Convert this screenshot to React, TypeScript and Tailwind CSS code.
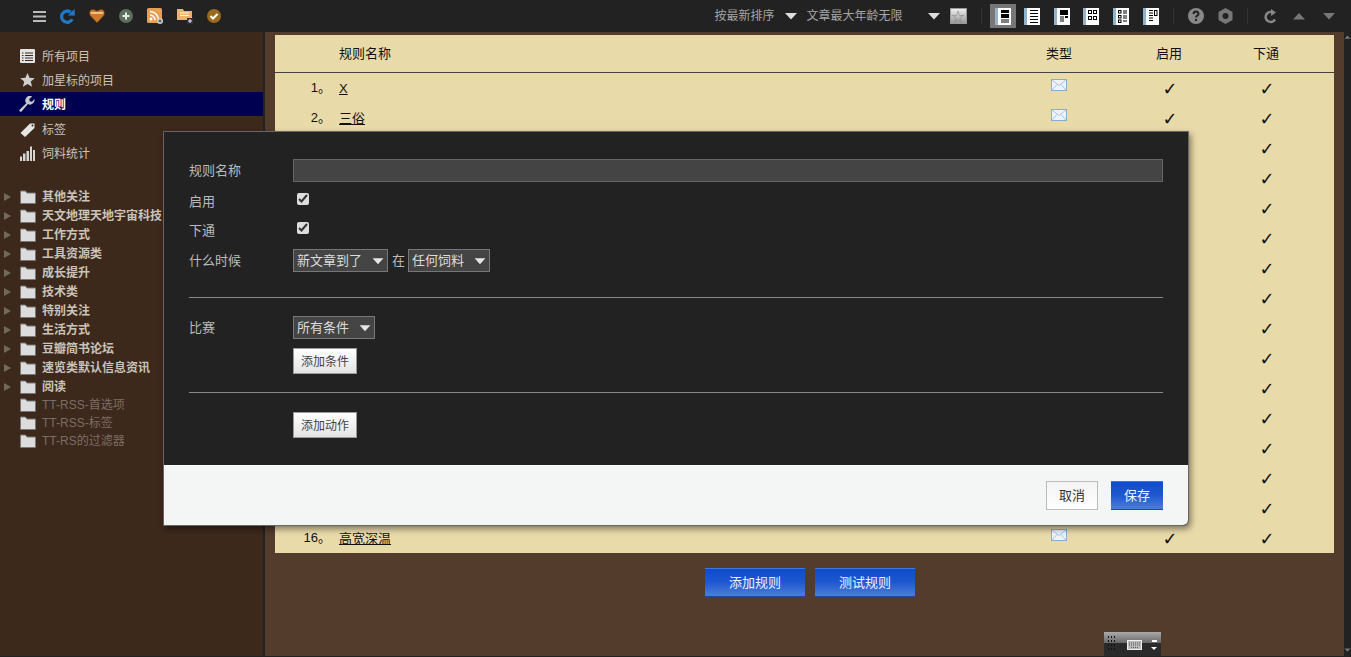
const CJK = `font-["Liberation_Sans","Noto_Sans_CJK_SC",sans-serif]`;

const Tri = ({ down = true, className = "" }: { down?: boolean; className?: string }) => (
  <svg width="14" height="8" viewBox="0 0 14 8" className={className}>
    <path d={down ? "M1 1h12L7 7.5z" : "M1 7.5h12L7 1z"} fill="currentColor" />
  </svg>
);

const LayoutIcon = ({ variant, active }: { variant: number; active?: boolean }) => {
  const bodies: Record<number, React.ReactNode> = {
    0: (
      <>
        <rect x="6" y="2" width="8" height="3" fill="#000" />
        <rect x="6" y="6" width="8" height="4" fill="#000" />
        <path d="M6 12h8M6 14h8" stroke="#000" />
      </>
    ),
    1: <path d="M6 2.5h8M6 5.5h8M6 8.5h8M6 11.5h8M6 14.5h8" stroke="#000" />,
    2: (
      <>
        <rect x="6" y="2" width="8" height="5" fill="#000" />
        <path d="M6 9h4M6 11h4M6 13h4" stroke="#000" />
        <rect x="11" y="8" width="3" height="2" fill="#000" />
      </>
    ),
    3: (
      <g fill="none" stroke="#000">
        <rect x="5.5" y="2.5" width="3" height="3" />
        <rect x="10.5" y="2.5" width="3" height="3" />
        <rect x="5.5" y="8.5" width="3" height="3" />
        <rect x="10.5" y="8.5" width="3" height="3" />
      </g>
    ),
    4: (
      <>
        <g fill="none" stroke="#000">
          <rect x="5.5" y="2.5" width="2.5" height="2.5" />
          <rect x="5.5" y="7.5" width="2.5" height="2.5" />
          <rect x="5.5" y="12" width="2.5" height="2.5" />
        </g>
        <path d="M10 3h4M10 5h4M10 8h4M10 10h4M10 13h4" stroke="#000" />
      </>
    ),
    5: (
      <>
        <path d="M6 2.5h4M6 5h4M6 7.5h4M6 10h4M6 12.5h4" stroke="#000" />
        <rect x="11.5" y="2.5" width="2.5" height="5" fill="none" stroke="#000" />
      </>
    ),
  };
  return (
    <span className={`flex w-[26px] h-6 items-center justify-center ${active ? "bg-[#777]" : ""}`}>
      <svg width="16" height="17" viewBox="0 0 16 17">
        <rect width="16" height="17" fill="#fff" />
        <rect width="3" height="17" fill="#8fb4cc" />
        {bodies[variant]}
      </svg>
    </span>
  );
};

const Folder = () => (
  <svg width="16" height="14" viewBox="0 0 16 14" className="shrink-0">
    <path d="M0.5 3V1h5l1.500 2h8.500v10.500H0.500z" fill="#dcdcdc" stroke="#777" />
  </svg>
);

const Mail = () => (
  <svg width="16" height="12" viewBox="0 0 16 12">
    <rect x="0.5" y="0.5" width="15" height="11" fill="#eef3fa" stroke="#86aed2" />
    <path d="M1 1l7 5.5L15 1M1 11l5-5.5M15 11l-5-5.5" fill="none" stroke="#a9c6e0" />
  </svg>
);

const navItems = [
  {
    label: "所有项目",
    icon: (
      <svg width="15" height="14" viewBox="0 0 15 14" className="shrink-0">
        <rect width="15" height="14" rx="1" fill="#e4e4e4" />
        <path d="M2 4h1.500M5 4h8M2 6.500h1.500M5 6.500h8M2 9h1.500M5 9h8M2 11.500h1.500M5 11.500h8" stroke="#3d291b" />
      </svg>
    ),
  },
  {
    label: "加星标的项目",
    icon: (
      <svg width="15" height="14" viewBox="0 0 16 15" className="shrink-0">
        <path d="M8 0l2.200 5.200 5.600.4-4.300 3.600 1.400 5.500L8 11.800l-4.900 2.900 1.400-5.500L.2 5.600l5.600-.4z" fill="#cfcfcf" />
      </svg>
    ),
  },
  {
    label: "规则",
    active: true,
    icon: (
      <svg width="16" height="16" viewBox="0 0 16 16" className="shrink-0">
        <path d="M0.800 13.500L7.300 7.200A4.500 4.500 0 0113.200.600L10.300 3l.5 2.200 2.200.5 2.400-2.600a4.500 4.500 0 01-6.400 5L2.800 15.300a1.300 1.300 0 01-2-1.800z" fill="#c8c8c8" />
      </svg>
    ),
  },
  {
    label: "标签",
    icon: (
      <svg width="15" height="15" viewBox="0 0 15 15" className="shrink-0">
        <path d="M0.500 11L10 1.500h4.500V6L5 15z" fill="#e6e6e6" />
        <circle cx="12.500" cy="3.500" r="1" fill="#3d291b" />
      </svg>
    ),
  },
  {
    label: "饲料统计",
    icon: (
      <svg width="15" height="15" viewBox="0 0 15 15" className="shrink-0">
        <path d="M0 10.500h2v4.500H0zM3 7.500h2.500V15H3zM6.500 5h2.500v10H6.500zM10 .5h2V15h-2zM13 4h2v11h-2z" fill="#d6d6d6" />
      </svg>
    ),
  },
];

const folders = ["其他关注", "天文地理天地宇宙科技", "工作方式", "工具资源类", "成长提升", "技术类", "特别关注", "生活方式", "豆瓣简书论坛", "速览类默认信息资讯", "阅读"];
const specials = ["TT-RSS-首选项", "TT-RSS-标签", "TT-RS的过滤器"];

const rows = Array.from({ length: 16 }, (_, i) => ({
  n: i + 1,
  name: i === 0 ? "X" : i === 1 ? "三俗" : i === 15 ? "高宽深温" : "",
}));

const Select = ({ label, width }: { label: string; width: string }) => (
  <span className={`flex h-[23px] items-center justify-between border border-[#777] bg-[#444] pl-[3px] pr-[2px] text-[13px] text-[#ddd] ${width}`}>
    {label}
    <Tri className="text-[#e6e6e6] scale-90" />
  </span>
);

const Check = () => (
  <span className="flex w-3 h-3 items-center justify-center rounded-[2px] bg-[#ddd]">
    <svg width="10" height="9" viewBox="0 0 10 9">
      <path d="M1 5l2.500 2.500L9 1" fill="none" stroke="#333" strokeWidth="2" />
    </svg>
  </span>
);

const blueBtn = "border-t border-t-[#3f77d8] border-b border-b-[#1b48a8] bg-gradient-to-b from-[#0d4ccb] via-[#1f58cf] to-[#4e7dd8] text-[13px] text-[#eef3ff]";
const grayBtn = "h-[26px] w-16 border border-[#999] bg-gradient-to-b from-white to-[#e4e4e4] pt-[2px] text-[12px] text-[#444]";
const tableCols = "grid-cols-[64px_665px_110px_110px_84px]";

export default function App() {
  return (
    <div className={`relative flex h-[657px] w-[1351px] flex-col overflow-hidden border-b border-b-[#222] bg-[#543c2c] ${CJK}`}>
      {/* toolbar */}
      <div className="flex h-8 shrink-0 items-center bg-[#222] text-[12px] text-[#a5a5a5]">
        <div className="ml-[33px] flex items-center gap-[14px]">
          <svg width="13" height="11" viewBox="0 0 13 11"><path d="M0 1h13M0 5.500h13M0 10h13" stroke="#bbb" strokeWidth="2" /></svg>
          <svg width="15" height="15" viewBox="0 0 16 16"><path d="M13 11a6 6 0 11-1.500-7.500" fill="none" stroke="#1f78c8" strokeWidth="3.500" /><path d="M8.500 7H16L15.500 0z" fill="#1f78c8" /></svg>
          <svg width="16" height="14" viewBox="0 0 16 14"><path d="M8 14L1 6.500C-1 3 2-.500 5 .500L8 2l3-1.500c3-1 6 2.500 4 6z" fill="#c9782c" stroke="#5c2a10" strokeWidth="0.700" /><path d="M1.500 3h13l-.500 2h-12z" fill="#f0c080" /></svg>
          <svg width="14" height="14" viewBox="0 0 14 14"><circle cx="7" cy="7" r="7" fill="#5c6e5c" /><path d="M7 3.500v7M3.500 7h7" stroke="#e8e8e8" strokeWidth="2" /></svg>
          <svg width="16" height="16" viewBox="0 0 16 16"><rect width="15" height="15" rx="1.500" fill="#e8a050" /><circle cx="4" cy="11" r="1.500" fill="#fff" /><path d="M3 7a5 5 0 015 5M3 3.500A8.500 8.500 0 0111.500 12" fill="none" stroke="#fff" strokeWidth="1.500" /><circle cx="13" cy="13" r="3" fill="#ccc" /><path d="M11.500 13h3M13 11.500v3" stroke="#444" /></svg>
          <svg width="16" height="15" viewBox="0 0 16 15"><path d="M0 0h6l1 2h8v9H0z" fill="#e9b46c" /><path d="M3 4h9M3 6.500h9" stroke="#fff3dc" /><rect x="10" y="9" width="6" height="6" fill="#333" /><path d="M11 12h4M13 10v4" stroke="#eee" /></svg>
          <svg width="14" height="14" viewBox="0 0 14 14"><circle cx="7" cy="7" r="7" fill="#9a6a1e" /><path d="M3.500 7l2.500 2.500 4.500-4.500" fill="none" stroke="#fff" strokeWidth="2" /></svg>
        </div>
        <span className="ml-auto">按最新排序</span>
        <Tri className="ml-[9px] text-[#ddd]" />
        <span className="ml-[9px]">文章最大年龄无限</span>
        <Tri className="ml-[24px] text-[#ddd]" />
        <span className="ml-[9px] flex h-4 w-[17px] items-center justify-center border border-[#999] bg-[linear-gradient(#eee,#999)] text-[13px] leading-none text-[#888]">☆</span>
        <span className="ml-[14px] h-4 w-px bg-[#333]" />
        <span className="ml-[8px] flex items-center gap-[3.6px]">
          {[0, 1, 2, 3, 4, 5].map((v) => <LayoutIcon key={v} variant={v} active={v === 0} />)}
        </span>
        <span className="ml-[9px] h-4 w-px bg-[#333]" />
        <svg className="ml-[14px]" width="16" height="16" viewBox="0 0 16 16"><circle cx="8" cy="8" r="8" fill="#888" /><path d="M5.500 6a2.500 2.500 0 115 0c0 1.500-2.500 1.500-2.500 3.500M8 11v2" fill="none" stroke="#222" strokeWidth="2" /></svg>
        <svg className="ml-[14.5px]" width="15" height="16" viewBox="0 0 15 16"><path d="M7.500 0l7 4v8l-7 4-7-4V4z" fill="#777" /><circle cx="7.500" cy="8" r="3" fill="#222" /></svg>
        <span className="ml-[14px] h-4 w-px bg-[#333]" />
        <svg className="ml-[14.500px]" width="15" height="15" viewBox="0 0 15 15"><path d="M12 10.500a5 5 0 11-2-7" fill="none" stroke="#888" strokeWidth="2.500" /><path d="M8 0v7l5-3.500z" fill="#888" /></svg>
        <Tri down={false} className="ml-[14.500px] text-[#777]" />
        <Tri className="ml-[16px] mr-[15px] text-[#777]" />
      </div>

      <div className="flex min-h-0 flex-1">
        {/* sidebar */}
        <aside className="flex w-[263px] shrink-0 flex-col bg-[#3d291b] pt-3 text-[12px] text-[#c8c3bb]">
          {navItems.map((item) => (
            <div
              key={item.label}
              className={`flex h-6 items-center ${item.active ? "bg-[#000050] font-bold text-white" : ""} ${item.label === "标签" ? "mt-px" : ""}`}
            >
              <span className="flex w-[42px] justify-center pl-[18px] pr-[6px]">{item.icon}</span>
              <span className="pt-[2px]">{item.label}</span>
            </div>
          ))}
          <div className="mt-[22px] flex flex-col">
            {folders.map((f) => (
              <div key={f} className="flex h-[19px] items-center font-bold">
                <span className="ml-[4px] h-0 w-0 border-y-[4px] border-l-[7px] border-y-transparent border-l-[#6e6a60]" />
                <span className="ml-[9px] mr-[6px]"><Folder /></span>
                {f}
              </div>
            ))}
            {specials.map((f) => (
              <div key={f} className="flex h-[18px] items-center pl-[20px] text-[#7c6c66]">
                <span className="mr-[6px]"><Folder /></span>
                {f}
              </div>
            ))}
          </div>
        </aside>
        <div className="w-[2px] shrink-0 bg-[#222]" />

        {/* main */}
        <main className="flex min-w-0 flex-1 flex-col pl-[10px] pt-[3px]">
          <div className="w-[1059px] bg-[#e9daaa] text-[13px] text-[#111]">
            <div className={`grid h-[38px] items-center border-b border-b-[#444] ${tableCols}`}>
              <span />
              <span>规则名称</span>
              <span className="text-center">类型</span>
              <span className="text-center">启用</span>
              <span className="text-center">下通</span>
            </div>
            {rows.map((r) => (
              <div key={r.n} className={`grid h-[30px] items-center ${tableCols}`}>
                <span className="pr-[15px] text-right">{r.n}<span className="inline-block w-[6px] text-left">。</span></span>
                <span className="pt-[2px]"><span className="underline">{r.name}</span></span>
                <span className="flex justify-center pb-[6px]"><Mail /></span>
                <span className={`pl-[2px] pt-[2px] text-center text-[18px] leading-none font-["DejaVu_Sans"]`}>✓</span>
                <span className={`pl-[2px] pt-[2px] text-center text-[18px] leading-none font-["DejaVu_Sans"]`}>✓</span>
              </div>
            ))}
          </div>
          <div className="mt-[15px] flex w-[1059px] justify-center gap-[10px] pl-[11px]">
            <button className={`h-[29px] w-[100px] ${blueBtn}`}>添加规则</button>
            <button className={`h-[29px] w-[100px] ${blueBtn}`}>测试规则</button>
          </div>
        </main>

        <div className="relative w-[7px] shrink-0 bg-[#222]">
          <Tri down={false} className="absolute left-0 top-[1px] w-[7px] text-[#777]" />
          <Tri className="absolute bottom-[2px] left-0 w-[7px] text-[#777]" />
        </div>
      </div>

      {/* modal */}
      <div className="absolute left-[163px] top-[131px] flex h-[395px] w-[1026px] flex-col overflow-hidden rounded-br-[6px] border border-[#666] bg-[#222] text-[13px] text-[#bbb] shadow-[2px_3px_6px_rgba(0,0,0,0.45)]">
        <div className="flex flex-1 flex-col px-[25px] pt-[27px]">
          <div className="flex h-[23px] items-center">
            <span className="w-[104px]">规则名称</span>
            <span className="h-full flex-1 border border-[#666] bg-[#444]" />
          </div>
          <div className="mt-[8px] flex h-[23px] items-center">
            <span className="w-[108px]">启用</span>
            <span className="-mt-[6px]"><Check /></span>
          </div>
          <div className="mt-[6px] flex h-[23px] items-center">
            <span className="w-[108px]">下通</span>
            <span className="-mt-[6px]"><Check /></span>
          </div>
          <div className="mt-[7px] flex h-[23px] items-center">
            <span className="w-[104px]">什么时候</span>
            <Select label="新文章到了" width="w-[95px]" />
            <span className="ml-[4px] mr-[3px]">在</span>
            <Select label="任何饲料" width="w-[82px]" />
          </div>
          <div className="mt-[25px] h-px bg-[#888]" />
          <div className="mt-[18px] flex h-[23px] items-center">
            <span className="w-[104px]">比赛</span>
            <Select label="所有条件" width="w-[82px]" />
          </div>
          <button className={`ml-[104px] mt-[9px] ${grayBtn}`}>添加条件</button>
          <div className="mt-[18px] h-px bg-[#888]" />
          <button className={`ml-[104px] mt-[19px] ${grayBtn}`}>添加动作</button>
        </div>
        <div className="flex h-[60px] shrink-0 items-start justify-end gap-[13px] border-t border-t-white bg-[#f4f6f6] pr-[25px] pt-[15px]">
          <button className="h-[29px] w-[52px] border border-[#bbb] bg-gradient-to-b from-[#f4f4f4] to-white text-[13px] text-[#333]">取消</button>
          <button className={`h-[29px] w-[52px] ${blueBtn}`}>保存</button>
        </div>
      </div>

      {/* keyboard widget */}
      <div className="absolute left-[1104px] top-[632px] flex h-[25px] w-[57px] items-center justify-between bg-[linear-gradient(#aaa,#666_45%,#2a2a2a_46%,#2a2a2a)] px-[4px]">
        <svg width="9" height="18" viewBox="0 0 9 18"><path d="M0 1h1M3 1h1M6 1h1M0 5h1M3 5h1M6 5h1M0 9h1M3 9h1M6 9h1M0 13h1M3 13h1M6 13h1" stroke="#111" strokeWidth="2" /></svg>
        <svg width="15" height="10" viewBox="0 0 15 10"><rect x="0.500" y="0.500" width="14" height="9" fill="#bbb" stroke="#eee" /><path d="M2 3h11M2 5h11M4 7.500h7" stroke="#555" strokeDasharray="1 1" /></svg>
        <span className="flex flex-col items-center gap-[5px]">
          <span className="h-[2px] w-[5px] bg-white" />
          <span className="h-0 w-0 border-x-[3px] border-t-[3px] border-x-transparent border-t-white" />
        </span>
      </div>
    </div>
  );
}
